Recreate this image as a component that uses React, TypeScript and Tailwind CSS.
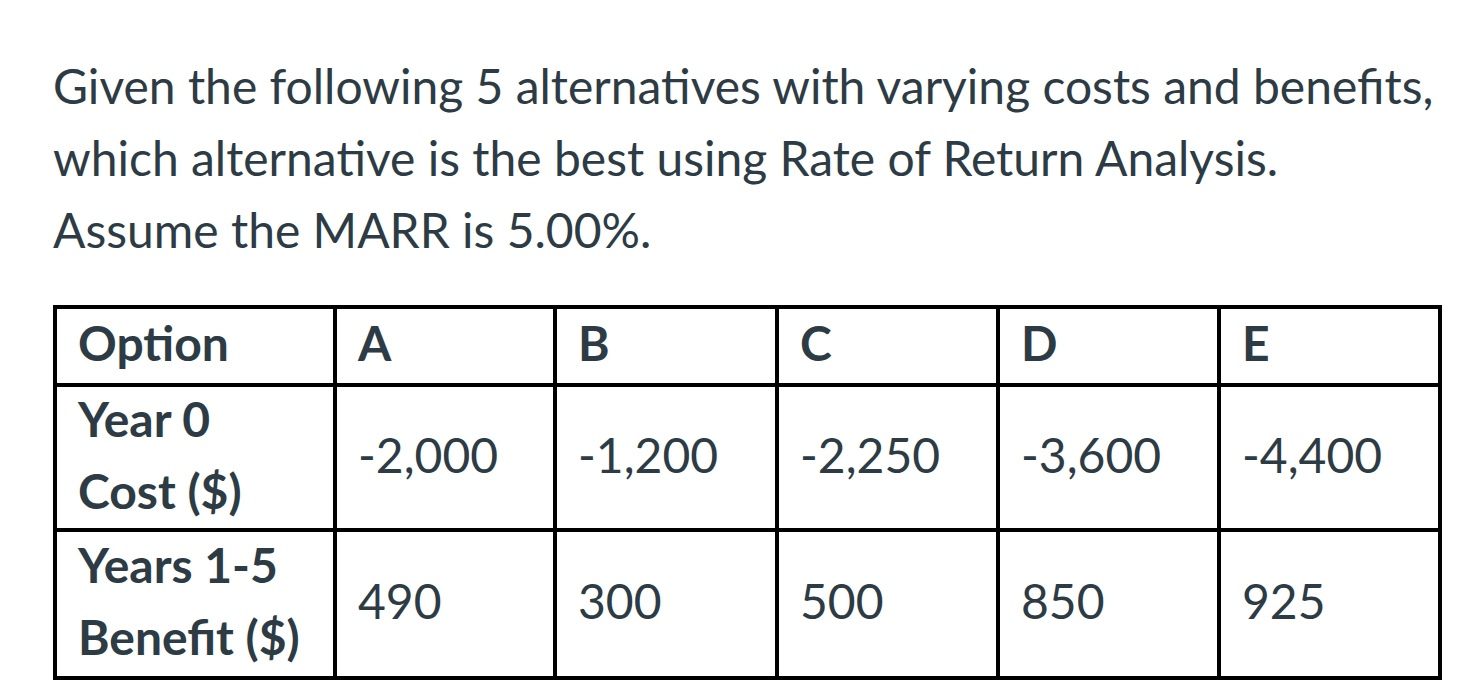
export default function App() {
  const heads = ["A", "B", "C", "D", "E"];
  const costs = ["-2,000", "-1,200", "-2,250", "-3,600", "-4,400"];
  const benefits = ["490", "300", "500", "850", "925"];

  return (
    <div className="min-h-screen bg-white text-[#2d3b45] font-['Lato',sans-serif]">
      <div className="pl-[53px] pt-[50px] w-[1442px]">
        <p className="text-[48px] leading-[72px]">
          Given the following 5 alternatives with varying costs and benefits,
          which alternative is the best using Rate of Return Analysis.
          <br />
          Assume the MARR is 5.00%.
        </p>

        <div className="mt-[39px] grid grid-cols-[276px_216px_218px_217px_217px_217px] grid-rows-[74px_141px_144px] gap-[4px] p-[4px] bg-black text-[48px] leading-[72px]">
          <div className="bg-white pl-[21px] pb-[6px] flex items-center font-bold">Option</div>
          {heads.map((h) => (
            <div key={h} className="bg-white pl-[21px] pb-[6px] flex items-center font-bold">
              {h}
            </div>
          ))}

          <div className="bg-white pl-[21px] pb-[6px] flex flex-col justify-center font-bold">
            <span>Year 0</span>
            <span>Cost ($)</span>
          </div>
          {costs.map((c) => (
            <div key={c} className="bg-white pl-[21px] pb-[6px] flex items-center">
              {c}
            </div>
          ))}

          <div className="bg-white pl-[21px] pb-[6px] flex flex-col justify-center font-bold">
            <span>Years 1-5</span>
            <span>Benefit ($)</span>
          </div>
          {benefits.map((b) => (
            <div key={b} className="bg-white pl-[21px] pb-[6px] flex items-center">
              {b}
            </div>
          ))}
        </div>
      </div>
    </div>
  );
}
